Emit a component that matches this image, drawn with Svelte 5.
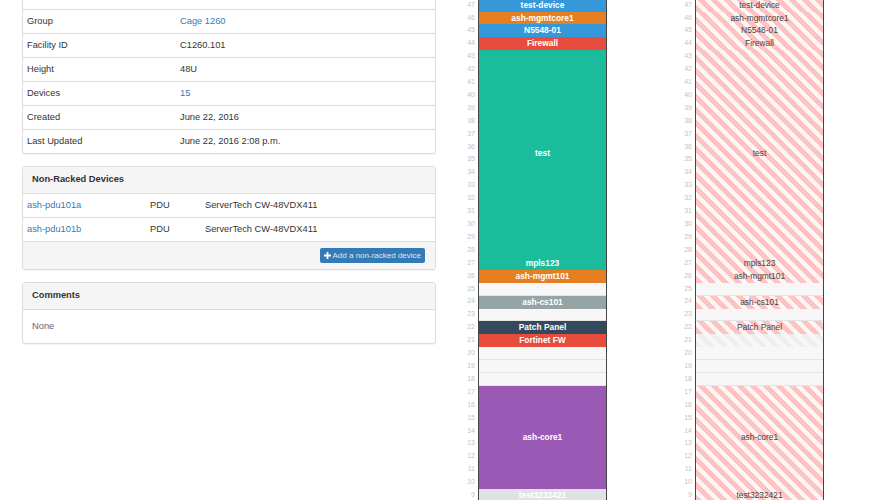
<script>
	const attrs = [
		{ label: 'Site', value: 'Ashburn DC', link: true },
		{ label: 'Group', value: 'Cage 1260', link: true },
		{ label: 'Facility ID', value: 'C1260.101' },
		{ label: 'Height', value: '48U' },
		{ label: 'Devices', value: '15', link: true },
		{ label: 'Created', value: 'June 22, 2016' },
		{ label: 'Last Updated', value: 'June 22, 2016 2:08 p.m.' }
	];
	const nonRacked = [
		{ name: 'ash-pdu101a', role: 'PDU', type: 'ServerTech CW-48VDX411' },
		{ name: 'ash-pdu101b', role: 'PDU', type: 'ServerTech CW-48VDX411' }
	];
	const front = [
		{ n: 1, name: 'test-device', color: '#3498db' },
		{ n: 1, name: 'ash-mgmtcore1', color: '#e67e22' },
		{ n: 1, name: 'N5548-01', color: '#3498db' },
		{ n: 1, name: 'Firewall', color: '#e74c3c' },
		{ n: 16, name: 'test', color: '#1abc9c' },
		{ n: 1, name: 'mpls123', color: '#1abc9c' },
		{ n: 1, name: 'ash-mgmt101', color: '#e67e22' },
		{ n: 1 },
		{ n: 1, name: 'ash-cs101', color: '#95a5a6' },
		{ n: 1 },
		{ n: 1, name: 'Patch Panel', color: '#34495e' },
		{ n: 1, name: 'Fortinet FW', color: '#e74c3c' },
		{ n: 1 },
		{ n: 1 },
		{ n: 1 },
		{ n: 8, name: 'ash-core1', color: '#9b59b6' },
		{ n: 1, name: 'test3232421', color: '#dde3e5' }
	];
	// rear view: same devices, striped, except the gaps and the reserved unit 21
	const rear = front.map((d) => {
		if (d.name === 'Fortinet FW') return { n: 1, reserved: true };
		return d.name ? { n: d.n, name: d.name, occupied: true } : { n: 1 };
	});
	const units = [];
	for (let u = 47; u >= 9; u--) units.push(u);
</script>

<div class="page">
	<div class="left">
		<div class="panel">
			<table>
				<tbody>
					{#each attrs as row}
						<tr>
							<td class="key">{row.label}</td>
							<td>
								{#if row.link}<a href="#top">{row.value}</a>{:else}{row.value}{/if}
							</td>
						</tr>
					{/each}
				</tbody>
			</table>
		</div>

		<div class="panel">
			<div class="heading">Non-Racked Devices</div>
			<table class="devices">
				<tbody>
					{#each nonRacked as d}
						<tr>
							<td class="dname"><a href="#top">{d.name}</a></td>
							<td class="drole">{d.role}</td>
							<td>{d.type}</td>
						</tr>
					{/each}
				</tbody>
			</table>
			<div class="footer">
				<span class="btn">
					<svg width="7" height="7" viewBox="0 0 7 7"><path d="M2.6 0h1.8v2.6H7v1.8H4.4V7H2.6V4.4H0V2.6h2.6z" fill="#fff" /></svg>
					Add a non-racked device
				</span>
			</div>
		</div>

		<div class="panel">
			<div class="heading">Comments</div>
			<div class="body">None</div>
		</div>
	</div>

	<div class="elevation first">
		<ul class="labels">
			{#each units as u}<li>{u}</li>{/each}
		</ul>
		<div class="rack">
			{#each front as d}
				{#if d.name}
					<div class="dev" style="--n: {d.n}; background: {d.color}">{d.name}</div>
				{:else}
					<div class="dev empty" style="--n: {d.n}"></div>
				{/if}
			{/each}
		</div>
	</div>

	<div class="elevation second">
		<ul class="labels">
			{#each units as u}<li>{u}</li>{/each}
		</ul>
		<div class="rack">
			{#each rear as d}
				<div class="dev" class:empty={!d.name && !d.reserved} class:reserved={d.reserved} class:occupied={d.occupied} style="--n: {d.n}">{d.name || ''}</div>
			{/each}
		</div>
	</div>
</div>

<style>
	:global(body) {
		margin: 0;
		background: #fff;
	}
	.page {
		--u: 12.92px;
		display: flex;
		height: 500px;
		width: 888px;
		overflow: hidden;
		padding-left: 22px;
		box-sizing: border-box;
		font-family: "Liberation Sans", Arial, sans-serif;
		font-size: 9.3px;
		color: #333;
	}
	a {
		color: #337ab7;
		text-decoration: none;
	}
	.left {
		width: 414px;
		margin-top: -15.5px;
	}
	.panel {
		border: 1px solid #ddd;
		border-radius: 3px;
		background: #fff;
		margin-bottom: 12.5px;
		box-shadow: 0 1px 1px rgba(0, 0, 0, 0.05);
		overflow: hidden;
	}
	table {
		width: 100%;
		border-collapse: collapse;
	}
	td {
		height: 23px;
		padding: 0 0 0 4px;
		border-top: 1px solid #ddd;
		box-sizing: content-box;
	}
	tr:first-child td {
		border-top: 0;
	}
	.key {
		width: 149px;
	}
	.heading {
		height: 25.5px;
		line-height: 25px;
		padding-left: 9px;
		background: #f5f5f5;
		border-bottom: 1px solid #ddd;
		font-weight: bold;
	}
	.dname {
		width: 119px;
	}
	.drole {
		width: 51px;
	}
	.footer {
		display: flex;
		justify-content: flex-end;
		align-items: center;
		height: 27px;
		padding-right: 10px;
		background: #f5f5f5;
		border-top: 1px solid #ddd;
	}
	.btn {
		display: flex;
		align-items: center;
		gap: 2px;
		height: 15px;
		padding: 0 4px;
		background: #337ab7;
		border-radius: 2px;
		color: #dfe9f2;
		font-size: 8px;
	}
	.body {
		height: 33px;
		line-height: 32px;
		padding-left: 9px;
		color: #666;
	}
	.elevation {
		display: flex;
		margin-top: -1.4px;
	}
	.first {
		margin-left: 29px;
	}
	.second {
		margin-left: 75px;
	}
	.labels {
		list-style: none;
		margin: 0;
		padding: 0;
		width: 13px;
	}
	.labels li {
		height: var(--u);
		line-height: var(--u);
		padding-right: 3px;
		text-align: right;
		font-size: 7px;
		color: #c4c4c4;
	}
	.rack {
		width: 127px;
		height: 520px;
		border-left: 1.5px solid #444;
		border-right: 1.5px solid #444;
		background: #f7f7f7;
	}
	.dev {
		height: calc(var(--u) * var(--n));
		line-height: calc(var(--u) * var(--n));
		text-align: center;
		font-size: 8.4px;
		font-weight: bold;
		color: #fff;
		white-space: nowrap;
	}
	.dev.empty {
		background: #f7f7f7;
		border-bottom: 1px solid #e4e4e4;
		box-sizing: border-box;
	}
	.dev.occupied {
		font-weight: normal;
		color: #444;
		background: repeating-linear-gradient(45deg, #ffc2c2, #ffc2c2 5px, #fcf6f4 5px, #fcf6f4 9.2px);
	}
	.dev.reserved {
		background: repeating-linear-gradient(45deg, #eee, #eee 4.6px, #f7f7f7 4.6px, #f7f7f7 9.2px);
	}
</style>
